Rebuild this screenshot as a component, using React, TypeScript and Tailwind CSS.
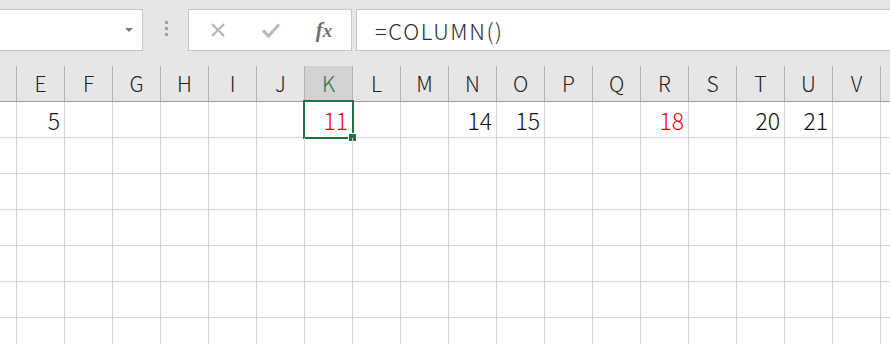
const cols = ["E","F","G","H","I","J","K","L","M","N","O","P","Q","R","S","T","U","V"];

const firstRow: Record<string, { v: string; red?: boolean }> = {
  E: { v: "5" },
  K: { v: "11", red: true },
  N: { v: "14" },
  O: { v: "15" },
  R: { v: "18", red: true },
  T: { v: "20" },
  U: { v: "21" },
};

const font = { fontFamily: '"Noto Sans CJK JP", "Noto Sans", sans-serif' };

const FormulaBar = () => (
  <div className="flex h-[66px] bg-[#e6e6e6] pt-[9px]">
    <div className="relative flex h-[42px] w-[143px] items-center justify-end border-y border-r border-[#c6c6c6] bg-white pr-[9px]">
      <div className="h-0 w-0 border-x-[4px] border-t-[4px] border-x-transparent border-t-[#7a7a7a]" />
    </div>
    <div className="flex w-[45px] flex-col items-center pt-[12px] pl-[2px] gap-[3px]">
      <div className="h-[3px] w-[3px] bg-[#a0a0a0]" />
      <div className="h-[3px] w-[3px] bg-[#a0a0a0]" />
      <div className="h-[3px] w-[3px] bg-[#a0a0a0]" />
    </div>
    <div className="flex h-[42px] w-[164px] items-center border border-[#c6c6c6] bg-white">
      <div className="flex w-[56px] justify-center pl-[2px]">
        <svg width="16" height="16" viewBox="0 0 16 16">
          <path d="M2 2L14 14M14 2L2 14" stroke="#b4b4b4" strokeWidth="2" />
        </svg>
      </div>
      <div className="flex w-[52px] justify-center">
        <svg width="20" height="16" viewBox="0 0 20 16">
          <path d="M2 8.5L7.5 14L18 2.5" stroke="#bcbcbc" strokeWidth="3.2" fill="none" />
        </svg>
      </div>
      <div
        className="flex w-[54px] justify-center text-[21px] font-bold italic text-[#6e6e6e]"
        style={{ fontFamily: '"Liberation Serif", "DejaVu Serif", serif' }}
      >
        <span className="leading-none">f<span className="text-[19px]">x</span></span>
      </div>
    </div>
    <div className="ml-[4px] flex h-[42px] flex-1 items-center border-y border-l border-[#c6c6c6] bg-white pl-[18px]">
      <span className="text-[22px] font-light tracking-[1.6px] text-[#2b2b3a]" style={font}>=COLUMN()</span>
    </div>
  </div>
);

const Header = () => (
  <div className="flex h-[36px] border-b border-[#a0a0a0] bg-[#e6e6e6] font-light" style={font}>
    <div className="w-[17px] shrink-0 border-r border-[#b4b4b4]" />
    {cols.map((c) => (
      <div
        key={c}
        className={`flex w-[48px] shrink-0 items-center justify-center border-r border-[#b4b4b4] text-[21px] ${
          c === "K" ? "bg-[#d2d2d2] text-[#217346]" : "text-[#222]"
        }`}
      >
        {c}
      </div>
    ))}
    <div className="flex-1" />
  </div>
);

const Row = ({ first }: { first?: boolean }) => (
  <div className="flex h-[36px] border-b border-[#d4d4d4] bg-white font-light" style={font}>
    <div className="w-[17px] shrink-0 border-r border-[#d4d4d4]" />
    {cols.map((c) => {
      const cell = first ? firstRow[c] : undefined;
      const selected = first && c === "K";
      return (
        <div
          key={c}
          className={`relative flex w-[48px] shrink-0 items-center justify-end border-r border-[#d4d4d4] pr-[4px] pt-[1px] text-[23px] ${
            cell?.red ? "text-[#ff0000]" : "text-[#111]"
          }`}
        >
          {cell?.v}
          {selected && (
            <div className="absolute -top-[2px] -bottom-[2px] -left-[2px] -right-[2px] border-2 border-[#217346]">
              <div className="absolute -right-[4px] -bottom-[4px] h-[7px] w-[7px] bg-[#217346] ring-1 ring-white" />
            </div>
          )}
        </div>
      );
    })}
    <div className="flex-1" />
  </div>
);

export default function App() {
  return (
    <div className="h-[344px] w-[890px] overflow-hidden bg-white">
      <FormulaBar />
      <Header />
      {[0, 1, 2, 3, 4, 5, 6].map((i) => (
        <Row key={i} first={i === 0} />
      ))}
    </div>
  );
}
